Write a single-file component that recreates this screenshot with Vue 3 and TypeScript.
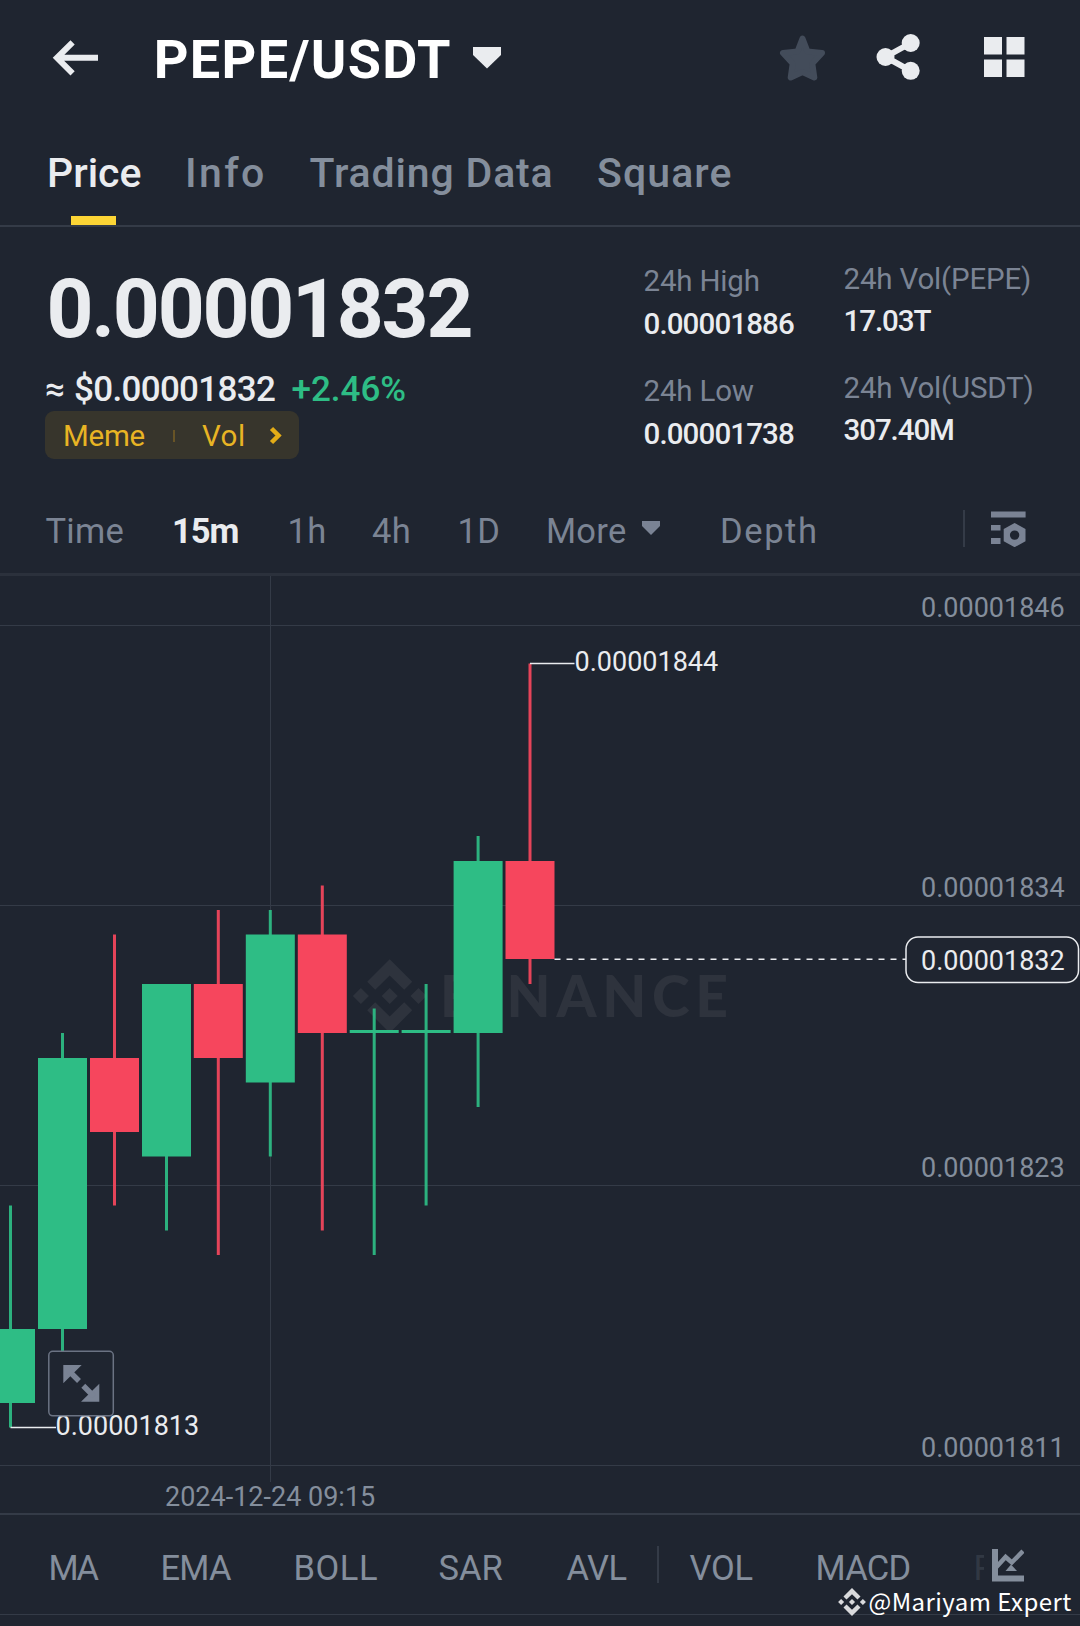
<script setup lang="ts">
interface Candle {
  x: number
  top: number
  bottom: number
  high: number
  low: number
  up: boolean
}

const tabs = ['Price', 'Info', 'Trading Data', 'Square']

const stats = [
  [
    { label: '24h High', value: '0.00001886' },
    { label: '24h Low', value: '0.00001738' },
  ],
  [
    { label: '24h Vol(PEPE)', value: '17.03T' },
    { label: '24h Vol(USDT)', value: '307.40M' },
  ],
]

const intervals = ['Time', '15m', '1h', '4h', '1D']
const overlays = ['MA', 'EMA', 'BOLL', 'SAR', 'AVL']
const oscillators = ['VOL', 'MACD', 'R']

const gridLines = [
  { y: 625.5, label: '0.00001846', baseline: 617 },
  { y: 905.5, label: '0.00001834', baseline: 897 },
  { y: 1185.5, label: '0.00001823', baseline: 1177 },
  { y: 1465.5, label: '0.00001811', baseline: 1457 },
]

const candles: Candle[] = [
  { x: 10.5, top: 1329, bottom: 1403, high: 1205.5, low: 1427.5, up: true },
  { x: 62.5, top: 1058, bottom: 1329, high: 1033, low: 1360, up: true },
  { x: 114.5, top: 1058, bottom: 1132, high: 934.5, low: 1205.5, up: false },
  { x: 166.5, top: 984, bottom: 1156.5, high: 984, low: 1230.5, up: true },
  { x: 218.3, top: 984, bottom: 1058, high: 910, low: 1255, up: false },
  { x: 270.3, top: 934.5, bottom: 1082.5, high: 910, low: 1156.5, up: true },
  { x: 322.3, top: 934.5, bottom: 1033, high: 885.5, low: 1230.5, up: false },
  { x: 374.2, top: 1030, bottom: 1033, high: 1008.5, low: 1255, up: true },
  { x: 426.1, top: 1030, bottom: 1033, high: 984, low: 1205.5, up: true },
  { x: 478.1, top: 861, bottom: 1033, high: 836, low: 1107, up: true },
  { x: 530, top: 861, bottom: 959, high: 663.5, low: 984, up: false },
]
</script>

<template>
  <div class="screen">
    <header class="header">
      <svg class="back" width="48" height="40" viewBox="52 37.5 48 40" fill="none" stroke="#eaecef" stroke-width="6">
        <path d="M72.6 41.8 57 57.3l15.6 15.5M58 57.3h40" />
      </svg>
      <h1 class="pair">PEPE/USDT</h1>
      <svg class="caret" width="28" height="22" viewBox="0 0 28 22"><path d="M0 0h28v8L14 21.5 0 8z" fill="#eaecef" /></svg>
      <svg class="star" width="48" height="48" viewBox="779.500 33.5 48 48">
        <path d="M803 38l5 13 14.5 1.500-9.700 10.500 2 14L803 71.500 791.200 77l2-14-9.700-10.500L798 51z" fill="#434c5a" stroke="#434c5a" stroke-width="6" stroke-linejoin="round" />
      </svg>
      <svg class="share" width="46" height="48" viewBox="875.500 34 46 48" fill="#eaecef">
        <path d="M911.200 43 886 57l25.200 13.800" fill="none" stroke="#eaecef" stroke-width="6" />
        <circle cx="911.200" cy="43" r="9" /><circle cx="886" cy="57" r="9" /><circle cx="911.200" cy="70.800" r="9" />
      </svg>
      <svg class="tiles" width="41" height="40" viewBox="0 0 41 40" fill="#eaecef">
        <path d="M0 0h18v17.500H0zM22.500 0h18v17.500h-18zM0 22.500h18V40H0zM22.500 22.500h18V40h-18z" />
      </svg>
    </header>

    <nav class="tabs">
      <a v-for="(t, i) in tabs" :key="t" :class="['tab', `tab-${i}`, { active: i === 0 }]">{{ t }}</a>
    </nav>

    <section class="summary">
      <div class="quote">
        <div class="price">0.00001832</div>
        <div class="fiat">
          <span>≈</span><span class="usd">$0.00001832</span><span class="change">+2.46%</span>
        </div>
        <div class="tag">
          <span class="meme">Meme</span><i></i><span class="vol">Vol</span>
          <svg width="14" height="20" viewBox="0 0 14 20"><path d="M2.500 2.500 9.500 9.500l-7 7" fill="none" stroke="#e3ac17" stroke-width="4.500" /></svg>
        </div>
      </div>
      <div v-for="(col, i) in stats" :key="i" :class="['stats', `stats-${i}`]">
        <div v-for="s in col" :key="s.label" class="stat">
          <span class="label">{{ s.label }}</span>
          <span class="value">{{ s.value }}</span>
        </div>
      </div>
    </section>

    <nav class="intervals">
      <span v-for="t in intervals" :key="t" :class="[`int-${t}`, { current: t === '15m' }]">{{ t }}</span>
      <span class="more">More</span>
      <svg class="more-caret" width="18" height="14" viewBox="0 0 18 14"><path d="M0 0h18v5L9 14 0 5z" fill="#7a8394" /></svg>
      <span class="depth">Depth</span>
      <i class="rule"></i>
      <svg class="config" width="35" height="36" viewBox="991 511 35 36" fill="#7a8394">
        <path d="M991 511.500h34.600v6H991zM991 525h9.500v5.400H991zM991 538h9.500v6H991z" />
        <path fill-rule="evenodd" d="M1014.600 523l10.900 6v12.200l-10.900 6-10.900-6V529zM1014.600 530.400a4.700 4.700 0 1 0 0 9.400 4.700 4.700 0 1 0 0-9.400z" />
      </svg>
    </nav>

    <svg class="chart" width="1080" height="937" viewBox="0 576 1080 937">
      <g stroke="#343b47">
        <path v-for="g in gridLines" :key="g.y" :d="`M0 ${g.y}H1080`" />
        <path d="M270.500 576V1482" />
      </g>
      <g class="axis">
        <text v-for="g in gridLines" :key="g.label" x="921" :y="g.baseline">{{ g.label }}</text>
        <text x="165" y="1506">2024-12-24 09:15</text>
      </g>
      <g fill="#2e333d">
        <g transform="translate(389.700 996)">
          <path d="M0-36.700 22.500-14.300l-8 8L0-20.600l-14.500 14.300-8-8z" />
          <path d="M0 36.700 22.500 14.300l-8-8L0 20.600l-14.500-14.300-8 8z" />
          <path d="M0-8 8 0 0 8-8 0zM-28.800-8l8 8-8 8-8-8zM28.800-8l8 8-8 8-8-8z" />
        </g>
        <text class="brand" x="440" y="1017" textLength="288">BINANCE</text>
      </g>
      <g v-for="c in candles" :key="c.x" :fill="c.up ? '#2ebd85' : '#f6465d'">
        <rect :x="c.x - 1.5" :y="c.high" width="3" :height="c.low - c.high" :opacity="0.92" />
        <rect :x="c.x - 24.5" :y="c.top" width="49" :height="c.bottom - c.top" />
      </g>
      <g stroke="#eaecef" stroke-width="1.500" fill="none">
        <path d="M530 663.500h44.500M10.500 1427.500H56" />
        <path d="M554.500 959.300H906" stroke-dasharray="6 6" />
      </g>
      <rect x="906" y="937" width="172.500" height="45.500" rx="12" fill="#1f2530" stroke="#eaecef" stroke-width="1.500" />
      <g class="mark">
        <text x="574.500" y="670.700">0.00001844</text>
        <text x="55.500" y="1434.700">0.00001813</text>
        <text x="921" y="970">0.00001832</text>
      </g>
      <rect x="48.800" y="1351.300" width="64.500" height="64.500" rx="4" fill="#1f2530" stroke="#6b7383" stroke-width="1.500" />
      <g fill="#7a8394">
        <path d="M63.300 1365h18.400L63.300 1383.300zM99.300 1401.700v-18l-18.300 18z" />
        <path d="M68 1370l11 11M94 1396.500l-10.700-10.800" stroke="#7a8394" stroke-width="5.500" />
      </g>
    </svg>

    <nav class="indicators">
      <span v-for="n in overlays" :key="n" :class="`ind-${n}`">{{ n }}</span>
      <i class="rule"></i>
      <span v-for="n in oscillators" :key="n" :class="`ind-${n}`">{{ n }}</span>
      <svg class="chart-icon" width="32" height="33" viewBox="992 1549 32 33" fill="#848e9c">
        <path d="M992 1549h6v26.500h26v6h-32z" />
        <path d="M996 1567.500 1005.600 1557l6.200 5.500 11.200-11.500" fill="none" stroke="#848e9c" stroke-width="4.500" />
        <path d="M1011 1564.500l6 6.500h-11.500z" />
      </svg>
    </nav>

    <div class="credit">
      <svg width="28" height="28" viewBox="-37 -37 74 74" fill="#d9dadc">
        <path d="M0-36.700 22.500-14.300l-8 8L0-20.600l-14.500 14.300-8-8z" />
        <path d="M0 36.700 22.500 14.300l-8-8L0 20.600l-14.500-14.300-8 8z" />
        <path d="M0-8 8 0 0 8-8 0zM-28.800-8l8 8-8 8-8-8zM28.800-8l8 8-8 8-8-8z" />
      </svg>
      <span>@Mariyam Expert</span>
    </div>
  </div>
</template>

<style>
body {
  background: #1f2530;
}
</style>

<style scoped>
.screen {
  position: relative;
  width: 1080px;
  height: 1626px;
  overflow: hidden;
  background: #1f2530;
  color: #eaecef;
  font-family: Roboto, "Liberation Sans", sans-serif;
}
.screen * {
  box-sizing: border-box;
}
svg {
  display: block;
}
span,
a,
h1 {
  white-space: nowrap;
}

.header {
  display: grid;
  grid-template-columns: 101.700px 319.300px 306px 96.500px 109px 1fr;
  align-items: center;
  height: 115px;
  padding-left: 52px;
}
.tiles {
  margin-top: -1px;
}
.pair {
  margin: 0;
  padding-top: 4.600px;
  color: #fff;
  font-size: 54px;
  font-weight: 700;
  line-height: 54px;
  letter-spacing: 1.340px;
}

.tabs {
  display: grid;
  grid-template-columns: 138px 124.500px 287.500px 1fr;
  height: 112px;
  padding: 38px 0 0 47px;
  border-bottom: 2px solid #343b47;
}
.tab {
  color: #848e9c;
  font-size: 41px;
  font-weight: 500;
  line-height: 40px;
  letter-spacing: 0.850px;
}
.tab-0 {
  letter-spacing: 0;
}
.tab-1 {
  letter-spacing: 2.400px;
}
.tab-3 {
  letter-spacing: 1.100px;
}
.active {
  color: #eaecef;
}
.active::after {
  content: "";
  display: block;
  width: 45px;
  height: 9px;
  margin: 23px 0 0 24px;
  background: #fcd535;
}

.summary {
  display: grid;
  grid-template-columns: 598.500px 200px 1fr;
  height: 262px;
  padding-left: 45px;
}
.quote {
  padding-top: 41px;
}
.price {
  margin-left: 1.500px;
  font-size: 82px;
  font-weight: 700;
  line-height: 82px;
  letter-spacing: -2.250px;
}
.fiat {
  display: grid;
  grid-template-columns: 29px 217.500px 1fr;
  margin-top: 21.500px;
  font-size: 35px;
  font-weight: 500;
  line-height: 35px;
}
.usd {
  letter-spacing: -0.680px;
}
.change {
  color: #2ebd85;
}
.tag {
  display: grid;
  grid-template-columns: 110px 29px 66.500px 14px;
  align-items: center;
  width: 254px;
  height: 48px;
  margin-top: 4.500px;
  padding: 1px 0 0 18px;
  border-radius: 9px;
  background: #37352c;
  color: #e8b424;
  font-size: 29.500px;
  line-height: 46px;
}
.tag i {
  width: 2px;
  height: 12px;
  background: #685426;
}
.meme {
  letter-spacing: -0.260px;
}
.vol {
  letter-spacing: 0.500px;
}
.stats {
  display: flex;
  flex-direction: column;
  gap: 37.500px;
  padding-top: 39px;
}
.stats-1 {
  gap: 37px;
  padding-top: 37.400px;
}
.stat {
  display: flex;
  flex-direction: column;
  gap: 12.500px;
  font-size: 29.500px;
  line-height: 30px;
}
.stats-1 .stat {
  gap: 12px;
}
.label {
  color: #7b8494;
  letter-spacing: -0.180px;
}
.value {
  font-weight: 500;
  letter-spacing: -0.870px;
}
.stats-1 .value {
  letter-spacing: -1.070px;
}

.intervals {
  display: grid;
  grid-template-columns: 126.500px 115.500px 84.500px 85.500px 88.500px 95.500px 78.500px 242.500px 28px 1fr;
  align-items: center;
  height: 87px;
  padding-left: 45.500px;
  border-bottom: 3px solid #2b313c;
  color: #7b8494;
  font-size: 34.500px;
  line-height: 40px;
  letter-spacing: 0.250px;
}
.current {
  color: #eaecef;
  font-weight: 700;
  letter-spacing: -1.040px;
}
.more-caret {
  margin-top: -6px;
}
.depth {
  letter-spacing: 1.600px;
}
.rule {
  width: 2px;
  height: 37px;
  background: #343b47;
}
.intervals .rule {
  margin-top: -5px;
}
.config {
  margin-top: -4px;
}

.axis {
  fill: #848e9c;
  font-size: 27px;
}
.mark {
  fill: #eaecef;
  font-size: 27px;
}
.brand {
  font-family: Lato, sans-serif;
  font-size: 57px;
  font-weight: 900;
}

.indicators {
  display: grid;
  grid-template-columns: 112px 133px 145px 128px 90px 33px 126px 158px 18px 1fr;
  align-items: center;
  height: 102px;
  padding: 7px 0 0 48.500px;
  border-top: 2px solid #343b47;
  border-bottom: 1px solid #343b47;
  color: #848e9c;
  font-size: 34.500px;
  line-height: 40px;
}
.ind-MA {
  letter-spacing: -2.500px;
}
.ind-EMA {
  letter-spacing: -0.770px;
}
.ind-BOLL {
  letter-spacing: 0.560px;
}
.ind-AVL {
  letter-spacing: -0.500px;
}
.ind-VOL {
  letter-spacing: -0.240px;
}
.ind-MACD {
  letter-spacing: -0.730px;
}
.ind-R {
  width: 10px;
  overflow: hidden;
  opacity: 0.180;
}
.indicators .rule {
  margin-top: -8px;
}
.chart-icon {
  margin-top: -6px;
}

.credit {
  position: absolute;
  left: 837.500px;
  top: 1586px;
  display: flex;
  align-items: center;
  gap: 3px;
  height: 32px;
  color: #fff;
  font: 400 24px/30px "Noto Sans CJK SC", sans-serif;
  letter-spacing: 0.450px;
}
.credit span {
  margin-top: -2px;
}
</style>
